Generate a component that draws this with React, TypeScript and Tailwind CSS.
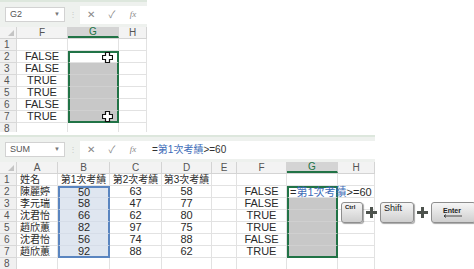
import React from "react";

const font = "font-['Liberation_Sans','Noto_Sans_CJK_TC',sans-serif]";

function Cursor() {
  return (
    <svg width="11" height="11" viewBox="0 0 11 11" className="shrink-0">
      <path
        d="M3.5 0.5h4v3h3v4h-3v3h-4v-3h-3v-4h3z"
        fill="#fff"
        stroke="#111"
        strokeWidth="1.2"
      />
    </svg>
  );
}

function Plus() {
  return (
    <svg width="11" height="11" viewBox="0 0 11 11">
      <path d="M4 0h3v4h4v3h-4v4h-3v-4h-4v-3h4z" fill="#4d524d" />
    </svg>
  );
}

function Toolbar({ name, formula }: { name: string; formula?: React.ReactNode }) {
  return (
    <div className="h-[27px] flex items-center bg-[#eef1ee] border-t-[2px] border-[#dde7dd] pl-[5px]">
      <div className="w-[60px] h-[15px] bg-white border border-[#d2d2d2] flex items-center justify-between px-[4px] text-[9px] text-[#555]">
        <span>{name}</span>
        <span className="text-[6px] text-[#777]">▼</span>
      </div>
      <div className="w-[15px] flex justify-center text-[#c8c8c8] text-[8px]">⋮</div>
      <div className="flex-1 h-[18px] bg-white flex items-center text-[#888]">
        <span className="w-[22px] text-center text-[10px]">✕</span>
        <span className="w-[20px] text-center text-[10px]">✓</span>
        <span className="w-[22px] text-center text-[9px] italic font-['Liberation_Serif',serif]">fx</span>
        {formula && <span className="ml-[8px] text-[10px] text-[#333]">{formula}</span>}
      </div>
    </div>
  );
}

function HeaderRow({ cols, active }: { cols: { label: string; w: number }[]; active: string }) {
  return (
    <div className="flex h-[12px] bg-[#f3f3f3] border-b border-[#d4d4d4] text-[10px] text-[#555]">
      <div className="w-[17px] relative border-r border-[#d4d4d4]">
        <div className="absolute right-[2px] bottom-[2px] w-0 h-0 border-l-[6px] border-l-transparent border-b-[6px] border-b-[#c4c4c4]" />
      </div>
      {cols.map((c) => (
        <div
          key={c.label}
          style={{ width: c.w }}
          className={
            "flex items-center justify-center border-r border-[#d4d4d4] " +
            (c.label === active ? "bg-[#d4d4d4] border-b-[2px] border-b-[#217346] text-[#217346]" : "")
          }
        >
          {c.label}
        </div>
      ))}
    </div>
  );
}

type Cell = { text?: React.ReactNode; cls?: string };

function Row({ n, cells, widths }: { n: number; cells: Cell[]; widths: number[] }) {
  return (
    <div className="flex h-[12px] text-[11px] text-[#2a2a2a]">
      <div className="w-[17px] shrink-0 bg-[#f0f0f0] border-r border-b border-[#d8d8d8] text-[10px] text-[#555] pl-[4px] leading-[11px]">
        {n}
      </div>
      {widths.map((w, i) => {
        const c = cells[i] || {};
        return (
          <div
            key={i}
            style={{ width: w }}
            className={"shrink-0 flex items-center whitespace-nowrap border-r border-b border-[#e2e2e2] leading-none " + (c.cls || "justify-center")}
          >
            {c.text}
          </div>
        );
      })}
    </div>
  );
}

const bools = ["FALSE", "FALSE", "TRUE", "TRUE", "FALSE", "TRUE"];

function TopSheet() {
  const widths = [51, 51, 28];
  const cols = [
    { label: "F", w: 51 },
    { label: "G", w: 51 },
    { label: "H", w: 28 },
  ];
  const selCls = (i: number) => {
    const base = "justify-end pr-[4px] border-l-[2px] border-l-[#217346] border-r-[2px] border-r-[#217346] ";
    if (i === 1) return base + "bg-white border-t-[2px] border-t-[#217346]";
    if (i === 6) return base + "bg-[#c8c8c8] border-b-[2px] border-b-[#217346] relative";
    return base + "bg-[#c8c8c8] border-b-[#d0d0d0]";
  };
  return (
    <div className="w-[147px] h-[132px] overflow-hidden">
      <Toolbar name="G2" />
      <HeaderRow cols={cols} active="G" />
      {Array.from({ length: 8 }).map((_, i) => (
        <Row
          key={i}
          n={i + 1}
          widths={widths}
          cells={
            i === 0 || i === 7
              ? []
              : [
                  { text: bools[i - 1] },
                  {
                    text: i === 1 || i === 6 ? <Cursor /> : null,
                    cls: selCls(i),
                  },
                ]
          }
        />
      ))}
    </div>
  );
}

const names = ["陳麗婷", "李元瑞", "沈君怡", "趙欣蕙", "沈君怡", "趙欣蕙"];
const s1 = [50, 58, 66, 82, 56, 92];
const s2 = [63, 47, 62, 97, 74, 88];
const s3 = [58, 77, 80, 75, 88, 62];

function Formula() {
  return (
    <span className="whitespace-nowrap">
      =<span className="text-[#3d6cb8]">第1次考績</span>&gt;=60
    </span>
  );
}

function BottomSheet() {
  const widths = [41, 52, 52, 50, 25, 50, 51, 37];
  const cols = ["A", "B", "C", "D", "E", "F", "G", "H"].map((l, i) => ({ label: l, w: widths[i] }));
  const bCls = (i: number) => {
    let c = "justify-center bg-[#dfe6f0] border-l-[2px] border-l-[#5a85c0] border-r-[2px] border-r-[#5a85c0] ";
    if (i === 1) c += "border-t-[2px] border-t-[#5a85c0] ";
    c += i === 6 ? "border-b-[2px] border-b-[#5a85c0]" : "border-b-[#d6dde8]";
    return c;
  };
  const gCls = (i: number) => {
    const base = "border-l-[2px] border-l-[#217346] border-r-[2px] border-r-[#217346] ";
    if (i === 1) return base + "bg-white border-t-[2px] border-t-[#217346] justify-start pl-[1px] overflow-visible relative z-10";
    if (i === 6) return base + "bg-[#c8c8c8] border-b-[2px] border-b-[#217346]";
    return base + "bg-[#c8c8c8] border-b-[#d0d0d0]";
  };
  const hd = "justify-center text-[10px]";
  return (
    <div className="w-[375px] h-[134px] overflow-hidden">
      <Toolbar name="SUM" formula={<Formula />} />
      <HeaderRow cols={cols} active="G" />
      {Array.from({ length: 8 }).map((_, i) => {
        const cells: Cell[] =
          i === 0
            ? [
                { text: "姓名", cls: "justify-start pl-[3px] text-[10px]" },
                { text: "第1次考績", cls: hd },
                { text: "第2次考績", cls: hd },
                { text: "第3次考績", cls: hd },
              ]
            : i === 7
            ? []
            : [
                { text: names[i - 1], cls: "justify-start pl-[3px] text-[10px]" },
                { text: s1[i - 1], cls: bCls(i) },
                { text: s2[i - 1] },
                { text: s3[i - 1] },
                {},
                { text: bools[i - 1] },
                { text: i === 1 ? <Formula /> : null, cls: gCls(i) },
              ];
        return <Row key={i} n={i + 1} widths={widths} cells={cells} />;
      })}
    </div>
  );
}

function Key({ w, children }: { w: number; children: React.ReactNode }) {
  return (
    <div
      style={{ width: w }}
      className="h-[21px] rounded-[3px] border border-[#8e8e8e] bg-gradient-to-b from-[#f6f6f6] to-[#cfcfcf] shadow-[1px_1px_1px_rgba(0,0,0,0.35)] px-[3px] pt-[1px] text-[#222]"
    >
      {children}
    </div>
  );
}

export default function App() {
  return (
    <div className={"w-[474px] h-[269px] bg-white relative overflow-hidden " + font}>
      <div className="flex flex-col gap-[3px]">
        <TopSheet />
        <BottomSheet />
      </div>
      <div className="absolute left-[341px] top-[202px] flex items-center gap-[3px]">
        <Key w={22}>
          <span className="text-[6px] font-bold leading-none block">Ctrl</span>
        </Key>
        <Plus />
        <Key w={34}>
          <span className="text-[9px] leading-none block">Shift</span>
        </Key>
        <Plus />
        <Key w={45}>
          <div className="pl-[8px] pt-[3px]">
            <span className="text-[7px] font-bold leading-none block">Enter</span>
            <svg width="20" height="4" viewBox="0 0 20 4" className="block">
              <path d="M1 2h18M1 2l2-1.5M1 2l2 1.5" stroke="#222" strokeWidth="0.8" fill="none" />
            </svg>
          </div>
        </Key>
      </div>
    </div>
  );
}
